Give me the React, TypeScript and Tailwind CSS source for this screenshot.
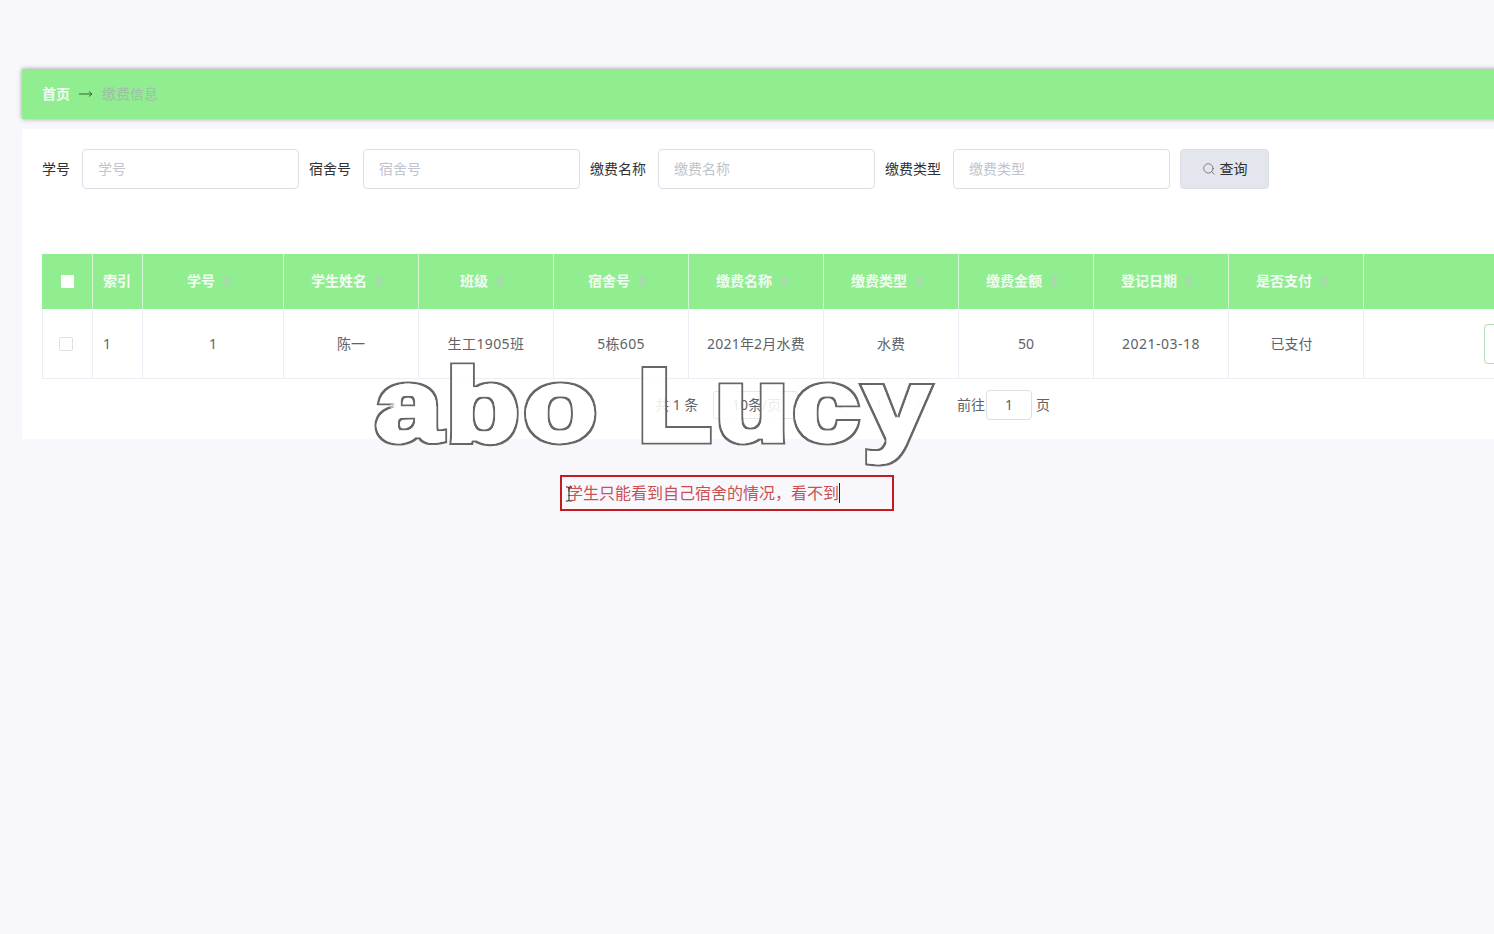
import React from 'react';
import { Search, ChevronLeft, ChevronRight } from 'lucide-react';

const cjk = "font-['Noto_Sans','Noto_Sans_CJK_SC',sans-serif]";

type Col = { title: string; value: string; width: string; extra: string };

const columns: Col[] = [
  { title: '学号', value: '1', width: 'w-[141px]', extra: '' },
  { title: '学生姓名', value: '陈一', width: 'w-[135px]', extra: '' },
  { title: '班级', value: '生工1905班', width: 'w-[135px]', extra: 'tracking-[0.4px]' },
  { title: '宿舍号', value: '5栋605', width: 'w-[135px]', extra: 'tracking-[0.3px]' },
  { title: '缴费名称', value: '2021年2月水费', width: 'w-[135px]', extra: 'tracking-[0.2px]' },
  { title: '缴费类型', value: '水费', width: 'w-[135px]', extra: '' },
  { title: '缴费金额', value: '50', width: 'w-[135px]', extra: '' },
  { title: '登记日期', value: '2021-03-18', width: 'w-[135px]', extra: 'tracking-[0.5px]' },
  { title: '是否支付', value: '已支付', width: 'w-[135px]', extra: 'pr-[9px]' },
];

const filters = [
  { label: '学号', labelWidth: 'w-[40px]' },
  { label: '宿舍号', labelWidth: 'w-[54px]' },
  { label: '缴费名称', labelWidth: 'w-[68px]' },
  { label: '缴费类型', labelWidth: 'w-[68px]' },
];

function SortIcon() {
  return (
    <svg width="8" height="12" viewBox="0 0 8 12" className="ml-[8px] mr-[8px] shrink-0">
      <path d="M4 0.5 7.5 5H0.5Z" fill="#b9cdbb" />
      <path d="M4 11.5 0.5 7H7.5Z" fill="#b9cdbb" />
    </svg>
  );
}

function Filter({ label, labelWidth }: { label: string; labelWidth: string }) {
  return (
    <div className="flex items-center mr-[10px]">
      <span className={`${labelWidth} shrink-0 pb-[2px] text-[14px] text-[#303133]`}>{label}</span>
      <div className="w-[217px] h-[40px] border border-[#dcdfe6] rounded-[4px] bg-white pl-[15px] pb-[2px] flex items-center text-[14px] text-[#c0c4cc]">
        {label}
      </div>
    </div>
  );
}

export default function App() {
  return (
    <div className={`${cjk} relative w-[1494px] h-[934px] overflow-hidden bg-[#f7f7fc]`}>
      <div className="h-[58px] bg-[#f8f8fb]" />

      <div className="pl-[22px] pt-[11px] w-[1660px]">
        {/* Fil d'ariane */}
        <div className="h-[50px] bg-[#90ee90] shadow-[0_0_5px_rgba(0,0,0,0.35)] flex items-center pl-[20px] text-[14px]">
          <span className="font-bold pb-[2px] text-[#f4fbf4]">首页</span>
          <svg width="14" height="8" viewBox="0 0 14 8" className="mx-[9px]">
            <path d="M0 4H13M10 1.5 13 4 10 6.5" fill="none" stroke="#2f6b2f" strokeWidth="1" />
          </svg>
          <span className="pb-[2px] text-[#9dbfa5]">缴费信息</span>
        </div>

        <div className="mt-[10px] h-[310px] bg-white pl-[20px] pt-[20px]">
          {/* Recherche */}
          <div className="flex items-center">
            {filters.map((f) => (
              <Filter key={f.label} {...f} />
            ))}
            <button className="w-[89px] h-[40px] bg-[#e3e6ec] border border-[#dcdfe6] rounded-[4px] flex items-center justify-center text-[14px] text-[#303133]">
              <Search size={14} strokeWidth={1.2} className="mr-[4px] text-[#555]" />
              <span className="pb-[2px]">查询</span>
            </button>
          </div>

          {/* Tableau */}
          <table className="mt-[65px] table-fixed border-collapse w-[1620px] text-[14px]">
            <thead>
              <tr className="h-[55px] bg-[#90ee90] font-bold">
                <th className="w-[50px] border-l border-r border-[#d6f5d6] border-l-[#90ee90]">
                  <span className="block mx-auto w-[13px] h-[13px] bg-white" />
                </th>
                <th className="w-[50px] border-r border-[#d6f5d6] pl-[10px] pb-[2px] text-left text-[#f4fbf4]">索引</th>
                {columns.map((c) => (
                  <th key={c.title} className={`${c.width} border-r border-[#d6f5d6]`}>
                    <span className="flex items-center justify-center pb-[2px] text-[#f4fbf4]">
                      {c.title}
                      <SortIcon />
                    </span>
                  </th>
                ))}
                <th />
              </tr>
            </thead>
            <tbody>
              <tr className="h-[69px] text-[#606266] border-b border-[#ebeef5]">
                <td className="border-l border-r border-[#ebeef5]">
                  <span className="block ml-[16px] mt-[1px] w-[14px] h-[14px] border border-[#dcdfe6] rounded-[2px] bg-white" />
                </td>
                <td className="border-r border-[#ebeef5] pl-[10px]">1</td>
                {columns.map((c) => (
                  <td key={c.title} className={`${c.extra} border-r border-[#ebeef5] text-center`}>
                    {c.value}
                  </td>
                ))}
                <td className="pl-[120px]">
                  <span className="block mt-[1px] w-[60px] h-[40px] border border-[#b6dcb6] rounded-[4px] bg-white" />
                </td>
              </tr>
            </tbody>
          </table>

          {/* Pagination */}
          <div className="flex items-center h-[30px] mt-[11px] pl-[613px] text-[14px] text-[#606266]">
            <span className="w-[58px]">共 1 条</span>
            <div className="w-[85px] h-[28px] border border-[#e4e7ed] rounded-[3px] pl-[18px] flex items-center">10条/页</div>
            <ChevronLeft size={12} className="ml-[35px] text-[#c0c4cc]" />
            <span className="ml-[30px] w-[38px] text-[#90ee90]">1</span>
            <ChevronRight size={12} className="text-[#c0c4cc]" />
            <span className="ml-[32px] w-[29px]">前往</span>
            <div className="w-[46px] h-[30px] border border-[#dcdfe6] rounded-[4px] flex items-center justify-center">1</div>
            <span className="ml-[4px]">页</span>
          </div>
        </div>
      </div>

      {/* Filtre du titre détouré : contour = glyphe épaissi moins son érosion */}
      <svg width="0" height="0" className="absolute">
        <filter id="outline" x="-5%" y="-5%" width="110%" height="110%">
          <feMorphology in="SourceAlpha" operator="erode" radius="2" result="inner" />
          <feFlood floodColor="#666666" result="ink" />
          <feComposite in="ink" in2="SourceAlpha" operator="in" result="ring" />
          <feFlood floodColor="#ffffff" floodOpacity="0.88" result="paper" />
          <feComposite in="paper" in2="inner" operator="in" result="fill" />
          <feComposite in="ring" in2="inner" operator="out" result="edge" />
          <feMerge>
            <feMergeNode in="edge" />
            <feMergeNode in="fill" />
          </feMerge>
        </filter>
      </svg>
      <div className="absolute left-[375px] top-[345px] origin-left [transform:scaleX(1.163)] [filter:url(#outline)] text-[104px] leading-[120px] font-bold font-['Liberation_Sans',sans-serif] text-black [-webkit-text-stroke:7px_#000000] whitespace-nowrap tracking-[3px]">
        abo&nbsp;Lucy
      </div>

      {/* Sous-titre en cours d'édition */}
      <div className="absolute left-[560px] top-[475px] w-[334px] h-[36px] border-2 border-[#c41a20] flex items-center pl-[5px] text-[16px] text-[#cc4f52]">
        学生只能看到自己宿舍的情况，看不到
        <span className="w-px h-[20px] bg-[#222]" />
      </div>
      <svg width="8" height="16" viewBox="0 0 8 16" className="absolute left-[565px] top-[486px]">
        <path d="M1 1H3.500L4 2 4.500 1H7M4 2V14M1 15H3.500L4 14 4.500 15H7" fill="none" stroke="#222" strokeWidth="1" />
      </svg>
    </div>
  );
}
